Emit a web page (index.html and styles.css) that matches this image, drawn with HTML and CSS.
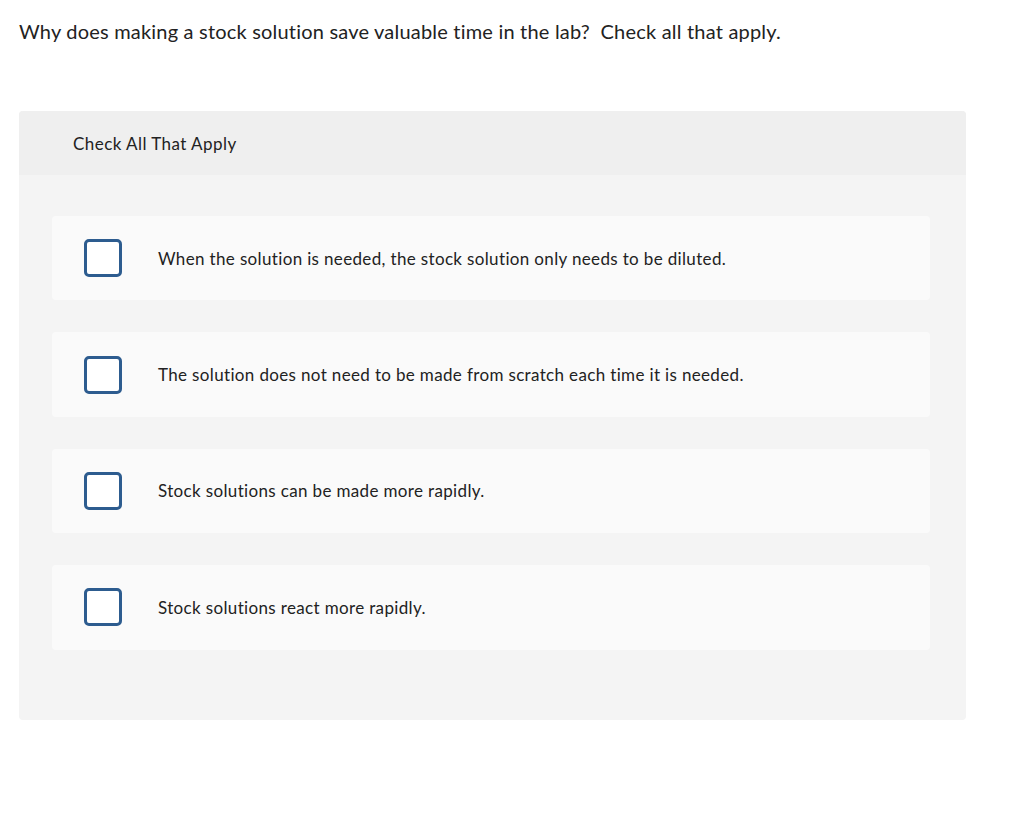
FILE: index.html
```html
<!DOCTYPE html>
<html>
<head>
    <meta charset="utf-8">
    <link rel="stylesheet" href="styles.css">
</head>
<body>
    <p class="question">Why does making a stock solution save valuable time in the lab?&nbsp; Check all that apply.</p>

    <div class="panel">
        <div class="panel-header">Check All That Apply</div>
        <div class="panel-body">
            <label class="choice">
                <span class="box"></span>
                <span class="choice-text">When the solution is needed, the stock solution only needs to be diluted.</span>
            </label>
            <label class="choice">
                <span class="box"></span>
                <span class="choice-text">The solution does not need to be made from scratch each time it is needed.</span>
            </label>
            <label class="choice">
                <span class="box"></span>
                <span class="choice-text">Stock solutions can be made more rapidly.</span>
            </label>
            <label class="choice">
                <span class="box"></span>
                <span class="choice-text">Stock solutions react more rapidly.</span>
            </label>
        </div>
    </div>
</body>
</html>
```

FILE: styles.css
```css
body {
    margin: 0;
    padding: 0 58px 0 19px;
    font-family: Lato, "Open Sans", sans-serif;
    color: #222;
    background: #fff;
}
.question {
    margin: 0;
    padding-top: 19px;
    font-size: 20px;
    line-height: 24px;
    letter-spacing: 0.2px;
}
.panel {
    margin-top: 68px;
    background: #f4f4f4;
    border-radius: 4px;
    overflow: hidden;
}
.panel-header {
    height: 64px;
    display: flex;
    align-items: center;
    padding-left: 54px;
    background: #efefef;
    font-size: 17px;
    letter-spacing: 0.45px;
}
.panel-body {
    padding: 41px 36px 70px 33px;
    display: flex;
    flex-direction: column;
    gap: 32px;
}
.choice {
    height: 84.4px;
    display: flex;
    align-items: center;
    background: #fafafa;
    border-radius: 4px;
    padding-left: 32px;
    cursor: pointer;
}
.box {
    width: 32px;
    height: 32px;
    border: 3px solid #2d5c8f;
    border-radius: 5px;
    background: #fff;
    flex-shrink: 0;
}
.choice-text {
    margin-left: 36px;
    font-size: 17px;
    letter-spacing: 0.35px;
}
```
